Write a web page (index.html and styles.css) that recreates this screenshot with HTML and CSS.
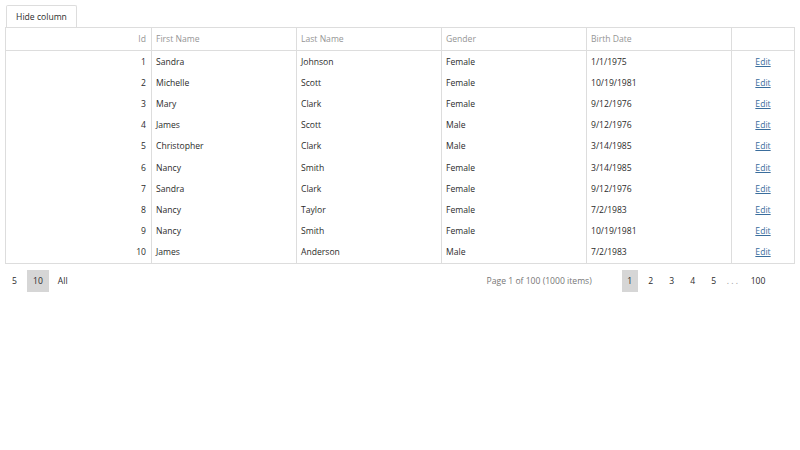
FILE: index.html
```html
<!DOCTYPE html>
<html>
<head>
<meta charset="utf-8">
<link rel="stylesheet" href="styles.css">
</head>
<body>
<div class="page">
  <div class="toolbar"><button class="btn">Hide column</button></div>
  <table class="grid">
    <colgroup>
      <col class="c-id"><col class="c-w"><col class="c-w"><col class="c-w"><col class="c-w"><col class="c-edit">
    </colgroup>
    <thead>
      <tr><th class="num">Id</th><th>First Name</th><th>Last Name</th><th>Gender</th><th>Birth Date</th><th></th></tr>
    </thead>
    <tbody>
      <tr><td class="num">1</td><td>Sandra</td><td>Johnson</td><td>Female</td><td>1/1/1975</td><td class="act"><a href="#">Edit</a></td></tr>
      <tr><td class="num">2</td><td>Michelle</td><td>Scott</td><td>Female</td><td>10/19/1981</td><td class="act"><a href="#">Edit</a></td></tr>
      <tr><td class="num">3</td><td>Mary</td><td>Clark</td><td>Female</td><td>9/12/1976</td><td class="act"><a href="#">Edit</a></td></tr>
      <tr><td class="num">4</td><td>James</td><td>Scott</td><td>Male</td><td>9/12/1976</td><td class="act"><a href="#">Edit</a></td></tr>
      <tr><td class="num">5</td><td>Christopher</td><td>Clark</td><td>Male</td><td>3/14/1985</td><td class="act"><a href="#">Edit</a></td></tr>
      <tr><td class="num">6</td><td>Nancy</td><td>Smith</td><td>Female</td><td>3/14/1985</td><td class="act"><a href="#">Edit</a></td></tr>
      <tr><td class="num">7</td><td>Sandra</td><td>Clark</td><td>Female</td><td>9/12/1976</td><td class="act"><a href="#">Edit</a></td></tr>
      <tr><td class="num">8</td><td>Nancy</td><td>Taylor</td><td>Female</td><td>7/2/1983</td><td class="act"><a href="#">Edit</a></td></tr>
      <tr><td class="num">9</td><td>Nancy</td><td>Smith</td><td>Female</td><td>10/19/1981</td><td class="act"><a href="#">Edit</a></td></tr>
      <tr><td class="num">10</td><td>James</td><td>Anderson</td><td>Male</td><td>7/2/1983</td><td class="act"><a href="#">Edit</a></td></tr>
    </tbody>
  </table>
  <div class="pager">
    <div class="sizes">
      <span class="pg">5</span><span class="pg sel">10</span><span class="pg">All</span>
    </div>
    <div class="info">Page 1 of 100 (1000 items)</div>
    <div class="pages">
      <span class="pn sel">1</span><span class="pn">2</span><span class="pn">3</span><span class="pn">4</span><span class="pn">5</span><span class="dots">. . .</span><span class="pn wide">100</span>
    </div>
  </div>
</div>
</body>
</html>
```
FILE: styles.css
```css
html, body {
  margin: 0;
  padding: 0;
  background: #fff;
}
body {
  font-family: "Segoe UI", "Open Sans", "Noto Sans", sans-serif;
  font-size: 8.6px;
  color: #2b2b2b;
}
.page {
  padding: 5px 5px 0 5px;
}
.toolbar {
  display: flex;
  padding-left: 1px;
}
.btn {
  font: inherit;
  color: #2b2b2b;
  background: #fff;
  border: 1px solid #ddd;
  border-bottom: none;
  border-radius: 2px 2px 0 0;
  width: 71px;
  height: 22px;
  padding: 0;
  margin: 0;
}
.grid {
  width: 790px;
  border-collapse: collapse;
  table-layout: fixed;
  border: 1px solid #ddd;
}
.c-id { width: 146px; }
.c-w { width: 145px; }
.c-edit { width: 63px; }
.grid th {
  font-weight: normal;
  color: #959595;
  text-align: left;
  height: 22px;
  padding: 0 4px;
  border-left: 1px solid #ddd;
  border-bottom: 1px solid #ddd;
}
.grid td {
  height: 21.2px;
  padding: 0 4px;
  border-left: 1px solid #ddd;
  white-space: nowrap;
}
.grid .num {
  text-align: right;
  padding-right: 5px;
}
.grid .act {
  text-align: center;
}
.grid a {
  color: #3a6d9c;
  text-decoration: underline;
}
.pager {
  display: flex;
  align-items: center;
  height: 34px;
}
.sizes {
  display: flex;
  gap: 3px;
}
.pg {
  display: inline-flex;
  align-items: center;
  justify-content: center;
  height: 22px;
  padding: 0 6px;
  min-width: 7px;
}
.sel {
  background: #d6d6d6;
}
.info {
  margin-left: auto;
  color: #777;
  margin-right: 30px;
}
.pages {
  display: flex;
  align-items: center;
  gap: 5px;
  margin-right: 22px;
}
.pn {
  display: inline-flex;
  align-items: center;
  justify-content: center;
  width: 16px;
  height: 22px;
}
.pn.wide {
  width: 30px;
}
.dots {
  color: #999;
}
```
